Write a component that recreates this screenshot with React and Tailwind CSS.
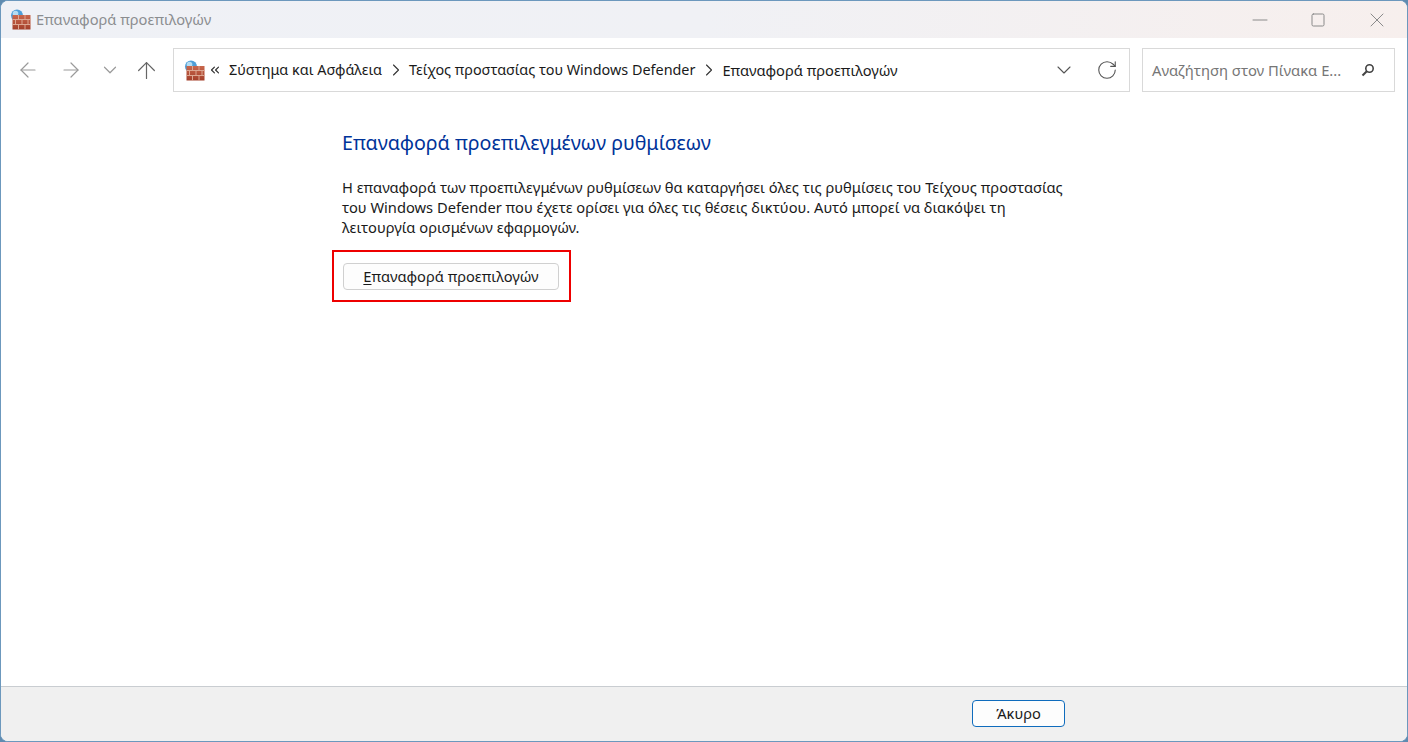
import { ArrowLeft, ArrowRight, ArrowUp, ChevronDown, ChevronRight, RotateCw, Minus, Square, X, ChevronsLeft } from 'lucide-react';

const FONT = "font-['Noto_Sans','Open_Sans',sans-serif]";

function FirewallIcon() {
  return (
    <svg width="21" height="21" viewBox="0 0 21 21" className="shrink-0">
      <defs>
        <linearGradient id="brick" x1="0" y1="0" x2="0" y2="1">
          <stop offset="0" stopColor="#c9674c" />
          <stop offset="1" stopColor="#a33f2b" />
        </linearGradient>
      </defs>
      <circle cx="7" cy="6.5" r="6" fill="#4f9fd8" />
      <circle cx="5.5" cy="4.5" r="2.8" fill="#b4dcf2" />
      <rect x="2.5" y="6" width="18" height="14.5" fill="url(#brick)" />
      <path d="M2.5 10.5h18M2.5 15.5h18M8.5 6v4.5M15 6v4.5M5.5 10.5v5M12 10.5v5M18 10.5v5M8.5 15.5v5M15 15.5v5" stroke="#dca792" strokeWidth="1" fill="none" />
    </svg>
  );
}

export default function App() {
  return (
    <div className={`${FONT} w-[1408px] h-[742px] bg-[#5f8bb0] overflow-hidden`}>
      <div className="w-full h-full flex flex-col bg-white border border-[#6c98bd] rounded-lg overflow-hidden">
        {/* title bar */}
        <div className="h-[37px] shrink-0 flex items-center bg-gradient-to-r from-[#eff1f6] via-[#f0f1f5] to-[#f7efed]">
          <div className="pl-[9px] flex items-center gap-[5px]">
            <FirewallIcon />
            <span className="text-[14.67px] leading-[20px] -mt-[2px] text-[#8b8d90]">Επαναφορά προεπιλογών</span>
          </div>
          <div className="ml-auto flex items-center text-[#8a8a8a]">
            <div className="w-[59px] flex justify-center"><Minus size={24} strokeWidth={1} absoluteStrokeWidth /></div>
            <div className="w-[59px] flex justify-center pr-[1px]"><Square size={16} strokeWidth={1} absoluteStrokeWidth /></div>
            <div className="w-[59px] flex justify-center pr-[1px]"><X size={24} strokeWidth={1} absoluteStrokeWidth /></div>
          </div>
        </div>

        {/* toolbar */}
        <div className="h-[64px] shrink-0 flex items-center">
          <div className="w-[172px] shrink-0 flex items-center pl-[15px]">
            <ArrowLeft size={24} strokeWidth={1.2} absoluteStrokeWidth className="text-[#9a9a9a]" />
            <ArrowRight size={24} strokeWidth={1.2} absoluteStrokeWidth className="text-[#9a9a9a] ml-[19px]" />
            <ChevronDown size={22} strokeWidth={1.2} absoluteStrokeWidth className="text-[#9a9a9a] ml-[16px]" />
            <ArrowUp size={27} strokeWidth={1.2} absoluteStrokeWidth className="text-[#666666] ml-[12px]" />
          </div>
          <div className="w-[957px] h-[44px] shrink-0 flex items-center border border-[#d9d9d9] pl-[10px] pr-[11px] text-[14.4px] text-[#1a1a1a]">
            <FirewallIcon />
            <ChevronsLeft size={14} strokeWidth={1.2} absoluteStrokeWidth className="ml-[3px] text-[#333333]" />
            <span className="ml-[7px]">Σύστημα και Ασφάλεια</span>
            <ChevronRight size={20} strokeWidth={1.1} absoluteStrokeWidth className="ml-[4px] text-[#333333]" />
            <span className="ml-[3px]">Τείχος προστασίας του Windows Defender</span>
            <ChevronRight size={20} strokeWidth={1.1} absoluteStrokeWidth className="ml-[4px] text-[#333333]" />
            <span className="ml-[3px] text-[14.67px]">Επαναφορά προεπιλογών</span>
            <ChevronDown size={24} strokeWidth={1.1} absoluteStrokeWidth className="ml-auto text-[#555555]" />
            <RotateCw size={22} strokeWidth={1.1} absoluteStrokeWidth className="ml-[20px] text-[#555555]" />
          </div>
          <div className="w-[253px] h-[44px] ml-[12px] shrink-0 flex items-center border border-[#d9d9d9] pl-[9px] pr-[19px] text-[14.8px] text-[#767676]">
            <span>Αναζήτηση στον Πίνακα Ε...</span>
            <svg width="14" height="14" viewBox="0 0 14 14" className="ml-auto">
              <circle cx="8.5" cy="5.5" r="3.7" fill="none" stroke="#444444" strokeWidth="1.6" />
              <path d="M5.8 8.2 1.5 12.5" stroke="#444444" strokeWidth="2" />
            </svg>
          </div>
        </div>

        {/* content */}
        <div className="flex-1 pl-[341px] pt-[27px]">
          <h1 className="text-[19.65px] leading-[28px] font-normal text-[#003399]">Επαναφορά προεπιλεγμένων ρυθμίσεων</h1>
          <p className="mt-[20px] w-[730px] text-[14.7px] leading-[20px] text-[#1a1a1a]">
            Η επαναφορά των προεπιλεγμένων ρυθμίσεων θα καταργήσει όλες τις ρυθμίσεις του Τείχους προστασίας
            <br />
            του Windows Defender που έχετε ορίσει για όλες τις θέσεις δικτύου. Αυτό μπορεί να διακόψει τη
            <br />
            λειτουργία ορισμένων εφαρμογών.
          </p>
          <div className="mt-[13px] -ml-[10px] w-[239px] h-[52px] border-2 border-[#ee0000] flex items-center pl-[9px]">
            <button className="w-[216px] h-[27px] rounded-[4px] border border-[#d0d0d0] bg-[#fdfdfd] text-[14.67px] text-[#1a1a1a]">
              <span className="underline underline-offset-2">Ε</span>παναφορά προεπιλογών
            </button>
          </div>
        </div>

        {/* footer */}
        <div className="h-[55px] shrink-0 flex items-center bg-[#f0f0f0] border-t border-[#c9cdd1] pl-[971px] pb-[2px]">
          <button className="w-[93px] h-[27px] rounded-[4px] border border-[#0f6cbd] bg-[#fdfdfd] text-[14.67px] text-[#1a1a1a]">Άκυρο</button>
        </div>
      </div>
    </div>
  );
}
